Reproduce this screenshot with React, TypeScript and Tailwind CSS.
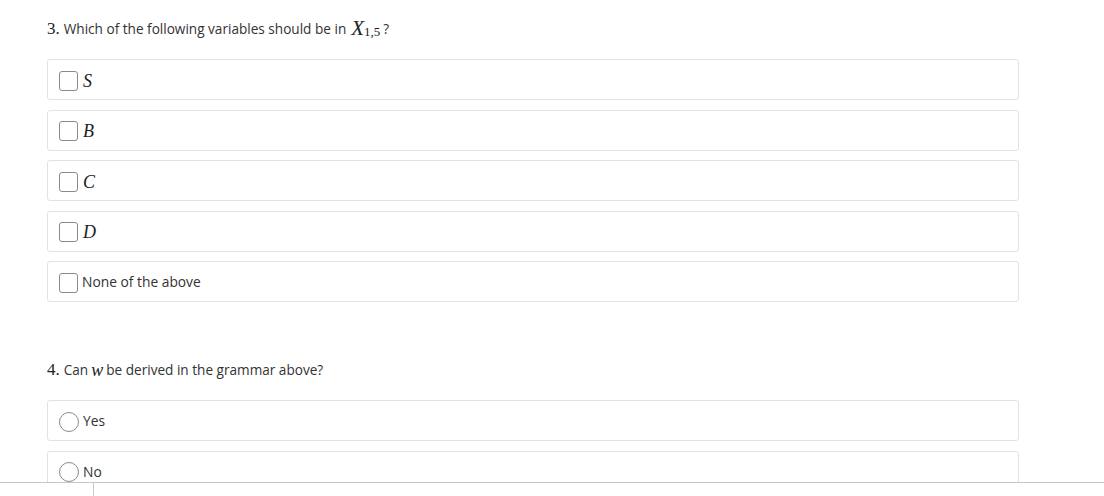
import React from "react";

const sans = "font-['Open_Sans','Noto_Sans',sans-serif]";
const serif = "font-['Liberation_Serif','DejaVu_Serif',serif]";

type Option = { label: string; math?: boolean };

const q3: Option[] = [
  { label: "S", math: true },
  { label: "B", math: true },
  { label: "C", math: true },
  { label: "D", math: true },
  { label: "None of the above" },
];

const q4: Option[] = [{ label: "Yes" }, { label: "No" }];

function OptionCard({ option, kind }: { option: Option; kind: "check" | "radio" }) {
  return (
    <div className="h-[41px] border border-[#e2e2e2] rounded-[3px] flex items-center pl-[11px] pt-[2px] bg-white">
      {kind === "check" ? (
        <span className="w-[19px] h-[20px] border border-[#8a8a8a] rounded-[3px] bg-white shrink-0" />
      ) : (
        <span className="w-[20px] h-[20px] border border-[#8a8a8a] rounded-full bg-white shrink-0" />
      )}
      {option.math ? (
        <span className={`${serif} italic text-[18px] text-[#222] ml-[5px] leading-none`}>{option.label}</span>
      ) : (
        <span className={`${sans} text-[13.8px] text-[#333] ml-[4px]`}>{option.label}</span>
      )}
    </div>
  );
}

export default function App() {
  return (
    <div className="min-h-screen bg-white">
      <div className="w-[1019px] pl-[47px] pt-[18px] pb-[40px]">
        {/* Question 3 */}
        <div className={`${sans} h-[22px] flex items-center text-[13.6px] text-[#333]`}>
          <span className={`${serif} text-[17px] text-[#222] mr-[4px]`}>3.</span>
          <span>Which of the following variables should be in</span>
          <span className={`${serif} italic text-[21px] text-[#222] ml-[5px]`}>
            X
            <sub className="not-italic text-[13px] relative top-[1px]">1,5</sub>
          </span>
          <span className="ml-[3px]">?</span>
        </div>
        <div className="mt-[19px] flex flex-col gap-[9.5px]">
          {q3.map((o) => (
            <OptionCard key={o.label} option={o} kind="check" />
          ))}
        </div>

        {/* Question 4 */}
        <div className={`${sans} mt-[57px] h-[22px] flex items-center text-[13.6px] text-[#333]`}>
          <span className={`${serif} text-[17px] text-[#222] mr-[4px]`}>4.</span>
          <span>Can</span>
          <span className={`${serif} italic text-[18px] text-[#222] mx-[3px]`}>w</span>
          <span>be derived in the grammar above?</span>
        </div>
        <div className="mt-[19px] flex flex-col gap-[9.5px]">
          {q4.map((o) => (
            <OptionCard key={o.label} option={o} kind="radio" />
          ))}
        </div>
      </div>

      {/* Bottom bar */}
      <div className="fixed bottom-0 left-0 right-0 h-[14px] bg-white border-t border-[#c8c8c8] flex">
        <div className="w-[94px] h-full border-r border-[#c8c8c8]" />
      </div>
    </div>
  );
}
